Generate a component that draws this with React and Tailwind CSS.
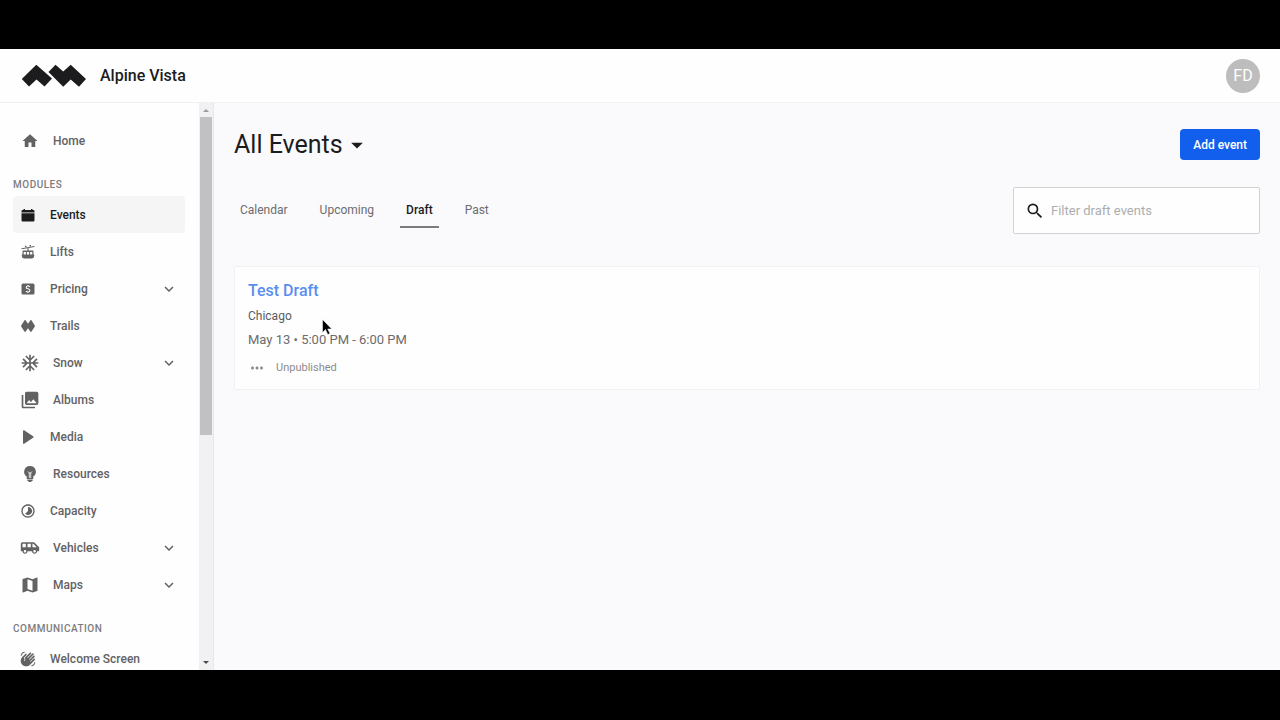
import React from "react";
import {
  MdHome, MdAcUnit, MdPhotoLibrary, MdTimelapse, MdAirportShuttle, MdMap,
  MdSearch, MdExpandMore, MdArrowDropDown, MdMoreHoriz, MdWavingHand,
} from "react-icons/md";

const Calendar = (p) => (
  <svg viewBox="0 0 14 14" fill="currentColor" {...p}>
    <path d="M2.500 1h1.500v1h6V1h1.500v1h.7c.7 0 1.300.6 1.300 1.300V4.500H.5V3.300C.5 2.600 1.100 2 1.800 2h.7Z" />
    <path d="M.5 5.300h13v6.900c0 .7-.6 1.300-1.300 1.300H1.800c-.7 0-1.300-.6-1.300-1.300Z" />
  </svg>
);
const Gondola = (p) => (
  <svg viewBox="0 0 14 14" fill="currentColor" {...p}>
    <path d="M.5 3.300 13.500.9v1L7.600 3v3H6.500V3.200L.5 4.300Z" />
    <path d="M4 .8h1.500v1.500H4ZM8.500 0H10v1.500H8.500Z" />
    <path fillRule="evenodd" d="M2.500 5.500h9c.6 0 1 .4 1 1V9.500h.7v1.200c0 1.600-1 2.800-2.500 2.800H3.300C1.800 13.500.8 12.300.8 10.700V9.500h.7v-3c0-.6.4-1 1-1ZM2.700 7v2.500h2.200V7Zm3.200 0v2.500h2.200V7Zm3.200 0v2.500h2.200V7Z" />
  </svg>
);
const Dollar = (p) => (
  <svg viewBox="0 0 14 14" fill="currentColor" {...p}>
    <path d="M2 1.500h10a1.500 1.500 0 0 1 1.500 1.500v8a1.500 1.500 0 0 1-1.500 1.500H2A1.500 1.500 0 0 1 .5 11V3A1.500 1.500 0 0 1 2 1.500Z" />
    <path d="M8.800 4.900C8.400 4.200 7.800 4 7 4c-1 0-1.800.5-1.800 1.400C5.200 7.200 8.900 6.500 8.900 8.500 8.900 9.400 8 10 7 10c-.9 0-1.600-.3-2-1M7 2.900V4M7 10v1.100" fill="none" stroke="#fefefe" strokeWidth="1.100" />
  </svg>
);
const Diamonds = (p) => (
  <svg viewBox="0 0 14 14" fill="currentColor" {...p}>
    <path d="M3.400 1.400c.4-.5.900-.5 1.300 0L7 4.800l2.300-3.400c.4-.5.900-.5 1.300 0L13.800 6.400c.2.400.2.800 0 1.200l-3.200 5c-.4.500-.9.500-1.300 0L7 9.200l-2.300 3.400c-.4.500-.9.500-1.300 0L.2 7.600c-.2-.4-.2-.8 0-1.200Z" />
  </svg>
);
const Play = (p) => (
  <svg viewBox="0 0 14 14" fill="currentColor" {...p}>
    <path d="M2 .8C2 .2 2.600 0 3.100.3l9 5.900c.6.400.6 1.200 0 1.600l-9 5.900c-.5.300-1.100.1-1.100-.5Z" />
  </svg>
);
const Bulb = (p) => (
  <svg viewBox="0 0 18 18" fill="currentColor" {...p}>
    <path d="M9 1a5.800 5.800 0 0 0-3.300 10.600V13.500c0 .4.300.7.700.7h5.200c.4 0 .7-.3.700-.7v-1.900A5.800 5.800 0 0 0 9 1Z" />
    <path d="M6.400 14.800h5.200v1.200H10.500v1H7.500v-1H6.400Z" />
    <path d="M7 6.500 8.300 8v5M11 6.500 9.700 8v5M8 8h2" fill="none" stroke="#fefefe" strokeWidth=".8" />
  </svg>
);

const SMALL = "size-[14px]";
const SMALL_PADDED = "-mx-px size-4";
const WIDE = "-mx-px size-5";

const modules = [
  { label: "Events", Icon: Calendar, active: true },
  { label: "Lifts", Icon: Gondola },
  { label: "Pricing", Icon: Dollar, expands: true },
  { label: "Trails", Icon: Diamonds },
  { label: "Snow", Icon: MdAcUnit, size: WIDE, expands: true },
  { label: "Albums", Icon: MdPhotoLibrary, size: WIDE },
  { label: "Media", Icon: Play },
  { label: "Resources", Icon: Bulb, size: "size-[18px]" },
  { label: "Capacity", Icon: MdTimelapse, size: SMALL_PADDED },
  { label: "Vehicles", Icon: MdAirportShuttle, size: WIDE, expands: true },
  { label: "Maps", Icon: MdMap, size: WIDE, expands: true },
];

function NavItem({ label, Icon, active, expands, size = SMALL }) {
  const wide = size === WIDE || size === "size-[18px]";
  const row = `flex h-[37px] w-full items-center rounded-sm px-2 text-left text-[12px] font-medium ${
    active ? "bg-[#f5f5f5] text-[#1c1c1e]" : "text-[#626264]"
  }`;
  const content = (
    <>
      <Icon className={`shrink-0 ${size}`} aria-hidden="true" />
      <span className={wide ? "ml-[14px] flex-1" : "ml-[15px] flex-1"}>{label}</span>
      {expands && <MdExpandMore className="-mr-px size-[18px]" aria-hidden="true" />}
    </>
  );
  return (
    <li>
      {expands ? (
        <button type="button" aria-expanded="false" className={row}>{content}</button>
      ) : (
        <a href="#" aria-current={active ? "page" : undefined} className={row}>{content}</a>
      )}
    </li>
  );
}

const tabs = ["Calendar", "Upcoming", "Draft", "Past"];

export default function App() {
  return (
    <div className="flex h-screen flex-col overflow-hidden bg-black pt-[49px] pb-[50px] font-['Roboto',sans-serif] text-[#1c1c1e]">
      <header className="flex h-[54px] shrink-0 items-center border-b border-[#f1f1f3] bg-[#fefefe] pl-[21px] pr-5">
        <svg viewBox="0 0 66 24" className="mr-[13px] h-6 w-[66px]" fill="currentColor" aria-hidden="true">
          <path d="M.8 15 15.300.7 31 14.500 23.500 22.500 15.500 15.500 8 22.500Z" />
          <path d="M27.500 8 34.500.7 42.200 7.500 49.700.7 65 15 58 22.700 49.700 15.500 42.200 22.700Z" />
        </svg>
        <span className="flex-1 text-[16px] leading-6 font-medium">Alpine Vista</span>
        <button type="button" aria-label="Account" className="size-[34px] rounded-full bg-[#bdbdbd] text-[16px] text-white">FD</button>
      </header>

      <div className="flex min-h-0 flex-1">
        <nav aria-label="Main" className="w-[199px] shrink-0 overflow-hidden bg-[#fefefe] pl-[13px] pr-[14px] pt-[19px]">
          <ul><NavItem label="Home" Icon={MdHome} size="size-[18px]" /></ul>
          <h2 className="mt-[18px] mb-[3px] text-[10px] leading-4 font-medium tracking-wider text-[#7c7c7e]">MODULES</h2>
          <ul>{modules.map((m) => <NavItem key={m.label} {...m} />)}</ul>
          <h2 className="mt-[18px] mb-[3px] text-[10px] leading-4 font-medium tracking-wider text-[#7c7c7e]">COMMUNICATION</h2>
          <ul><NavItem label="Welcome Screen" Icon={MdWavingHand} size={SMALL_PADDED} /></ul>
        </nav>
        <div className="flex w-[15px] shrink-0 flex-col items-center border-r border-[#e8e8ea] bg-[#f1f1f3]" aria-hidden="true">
          <svg viewBox="0 0 14 14" className="size-[14px] text-[#9c9c9e]" fill="currentColor"><path d="M4 9 7 6l3 3Z" /></svg>
          <div className="w-3 flex-[56] bg-[#c1c1c3]" />
          <div className="flex-[39]" />
          <svg viewBox="0 0 14 14" className="size-[14px] text-[#4a4a4c]" fill="currentColor"><path d="M4 5h6L7 8Z" /></svg>
        </div>

        <main className="min-w-0 flex-1 bg-[#fafafc] px-5 pt-[26px]">
          <div className="flex items-start justify-between">
            <h1>
              <button type="button" className="flex items-center text-[25px] leading-8 font-normal">
                All Events<MdArrowDropDown className="size-7" aria-hidden="true" />
              </button>
            </h1>
            <button type="button" className="h-[31px] rounded-sm bg-[#125fee] px-[13px] text-[12px] font-medium text-white">Add event</button>
          </div>

          <div className="mt-[26px] flex items-center justify-between">
            <div role="tablist" aria-label="Event filters" className="flex gap-5">
              {tabs.map((t) => (
                <button
                  key={t}
                  type="button"
                  role="tab"
                  aria-selected={t === "Draft"}
                  className={`h-[34px] border-b-2 px-[6px] text-[12px] ${
                    t === "Draft" ? "border-[#7c7c7e] font-medium text-[#1c1c1e]" : "border-transparent text-[#6c6c6e]"
                  }`}
                >
                  {t}
                </button>
              ))}
            </div>
            <label className="flex h-[47px] w-[247px] items-center rounded-xs border border-[#d2d2d0] bg-[#fefefe] pl-[11px]">
              <MdSearch className="mr-[6px] size-5" aria-hidden="true" />
              <input type="search" aria-label="Filter draft events" placeholder="Filter draft events" className="min-w-0 flex-1 bg-transparent text-[13px] outline-none placeholder:text-[#adadaf]" />
            </label>
          </div>

          <article className="mt-8 flex h-[124px] flex-col items-start rounded-xs border border-[#f1f1f3] bg-[#fefefe] px-[13px] pt-3">
            <a href="#" className="text-[16px] leading-6 font-medium text-[#5a8eee]">Test Draft</a>
            <p className="mt-px text-[12px] leading-6 text-[#5c5c5e]">Chicago</p>
            <p className="text-[13px] leading-6 text-[#6c6c6e]">May 13 • 5:00 PM - 6:00 PM</p>
            <div className="mt-1 flex items-center text-[11px] leading-6 text-[#8c8c8e]">
              <button type="button" aria-label="More actions"><MdMoreHoriz className="size-[18px]" /></button>
              <span className="ml-[10px]">Unpublished</span>
            </div>
          </article>
        </main>
      </div>

      <svg viewBox="0 0 12 18" className="absolute left-[322px] top-[319px] h-[18px] w-3" aria-hidden="true">
        <path d="M.5.5v13l3-3 2.300 5 2.200-1-2.300-4.500h4Z" fill="#000" stroke="#fff" strokeWidth=".5" />
      </svg>
    </div>
  );
}
